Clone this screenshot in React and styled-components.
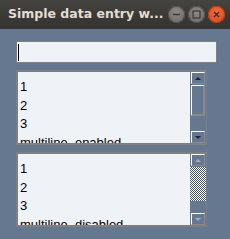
import React from "react";
import styled, { createGlobalStyle } from "styled-components";

const Global = createGlobalStyle`
  html, body { margin: 0; padding: 0; background: #667890; }
  body { width: 230px; height: 239px; overflow: hidden; }
`;

const Window = styled.div`
  width: 230px;
  height: 239px;
  display: flex;
  flex-direction: column;
  background: #667890;
`;

const TitleBar = styled.div`
  height: 29px;
  display: flex;
  align-items: center;
  padding: 0 5px 0 8px;
  box-sizing: border-box;
  background: linear-gradient(#45443f, #3a3935 60%, #34332f);
  gap: 3px;
`;

const Title = styled.div`
  flex: none;
  margin-right: auto;
  font-family: "DejaVu Sans", sans-serif;
  font-weight: bold;
  font-size: 12.5px;
  line-height: 16px;
  color: #e2ded5;
  white-space: nowrap;
  padding-bottom: 1px;
`;

const WinButton = styled.div`
  width: 17px;
  height: 17px;
  border-radius: 50%;
  display: flex;
  align-items: center;
  justify-content: center;
  background: ${(p) =>
    p.$close
      ? "radial-gradient(circle at 50% 35%, #f26b3a, #d9461b)"
      : "radial-gradient(circle at 50% 35%, #8a8984, #6b6a65)"};
  box-shadow: inset 0 0 0 1px ${(p) => (p.$close ? "#b93c15" : "#52514d")};
`;

const Body = styled.div`
  flex: 1;
  display: flex;
  flex-direction: column;
  gap: 7px;
  padding: 12px 13px 12px 16px;
`;

const Entry = styled.div`
  height: 22px;
  box-sizing: border-box;
  border: 1px solid #7f7f7f;
  background: #eff2f7;
  display: flex;
  align-items: center;
  padding-left: 1px;
`;

const Cursor = styled.div`
  width: 1px;
  height: 17px;
  background: #000;
`;

const TextBox = styled.div`
  width: 191px;
  height: 75px;
  box-sizing: border-box;
  border: 2px solid #7f7f7f;
  border-right-width: 1px;
  display: flex;
  background: #667890;
`;

const TextArea = styled.div`
  flex: 1;
  background: #eff2f7;
  overflow: hidden;
  padding: 6px 0 0 2px;
  font-family: "Liberation Sans", Arial, sans-serif;
  font-size: 13px;
  line-height: 18.5px;
  color: #000;
`;

const Line = styled.div`
  white-space: nowrap;
`;

const ScrollBar = styled.div`
  width: 14px;
  display: flex;
  flex-direction: column;
  padding: 0 1px 0 1px;
  gap: 1px;
`;

const ArrowBtn = styled.div`
  height: 12px;
  box-sizing: border-box;
  border-top: 1px solid #ffffff;
  border-left: 1px solid #ffffff;
  border-right: 1px solid #8a8a8a;
  border-bottom: 1px solid #8a8a8a;
  background: #667890;
  display: flex;
  align-items: center;
  justify-content: center;
  margin-top: ${(p) => (p.$top ? "0px" : "auto")};
`;

const Thumb = styled.div`
  height: 31px;
  box-sizing: border-box;
  border-top: 1px solid #ffffff;
  border-left: 1px solid #ffffff;
  border-right: 2px solid #8a8a8a;
  border-bottom: 2px solid #8a8a8a;
  background: #667890;
`;

const Stipple = styled.div`
  height: 34px;
  margin: 0 -1px;
  background-color: #ffffff;
  background-image: conic-gradient(#3f5470 25%, transparent 0 50%, #3f5470 0 75%, transparent 0);
  background-size: 2px 2px;
`;

const Arrow = ({ up, color }) => (
  <svg width="8" height="5" viewBox="0 0 8 5">
    {up ? (
      <polygon points="1,4 7,4 4,1" fill={color} />
    ) : (
      <polygon points="1,1 7,1 4,4" fill={color} />
    )}
  </svg>
);

const Box = ({ label, disabled }) => (
  <TextBox>
    <TextArea>
      <Line>1</Line>
      <Line>2</Line>
      <Line>3</Line>
      <Line>{label}</Line>
    </TextArea>
    <ScrollBar>
      <ArrowBtn $top>
        <Arrow up color={disabled ? "#a6adb8" : "#1e2530"} />
      </ArrowBtn>
      {disabled ? <Stipple /> : <Thumb />}
      <ArrowBtn>
        <Arrow color={disabled ? "#a6adb8" : "#1e2530"} />
      </ArrowBtn>
    </ScrollBar>
  </TextBox>
);

export default function App() {
  return (
    <Window>
      <Global />
      <TitleBar>
        <Title>Simple data entry w...</Title>
        <WinButton>
          <svg width="9" height="9" viewBox="0 0 9 9">
            <line x1="1" y1="4.5" x2="8" y2="4.5" stroke="#3a3935" strokeWidth="1.5" />
          </svg>
        </WinButton>
        <WinButton>
          <svg width="9" height="9" viewBox="0 0 9 9">
            <rect x="1" y="1" width="7" height="7" fill="none" stroke="#3a3935" strokeWidth="1.2" />
          </svg>
        </WinButton>
        <WinButton $close>
          <svg width="9" height="9" viewBox="0 0 9 9">
            <path d="M2 2 L7 7 M7 2 L2 7" stroke="#3a2a20" strokeWidth="1.4" />
          </svg>
        </WinButton>
      </TitleBar>
      <Body>
        <Entry>
          <Cursor />
        </Entry>
        <Box label="multiline_enabled" />
        <Box label="multiline_disabled" disabled />
      </Body>
    </Window>
  );
}
